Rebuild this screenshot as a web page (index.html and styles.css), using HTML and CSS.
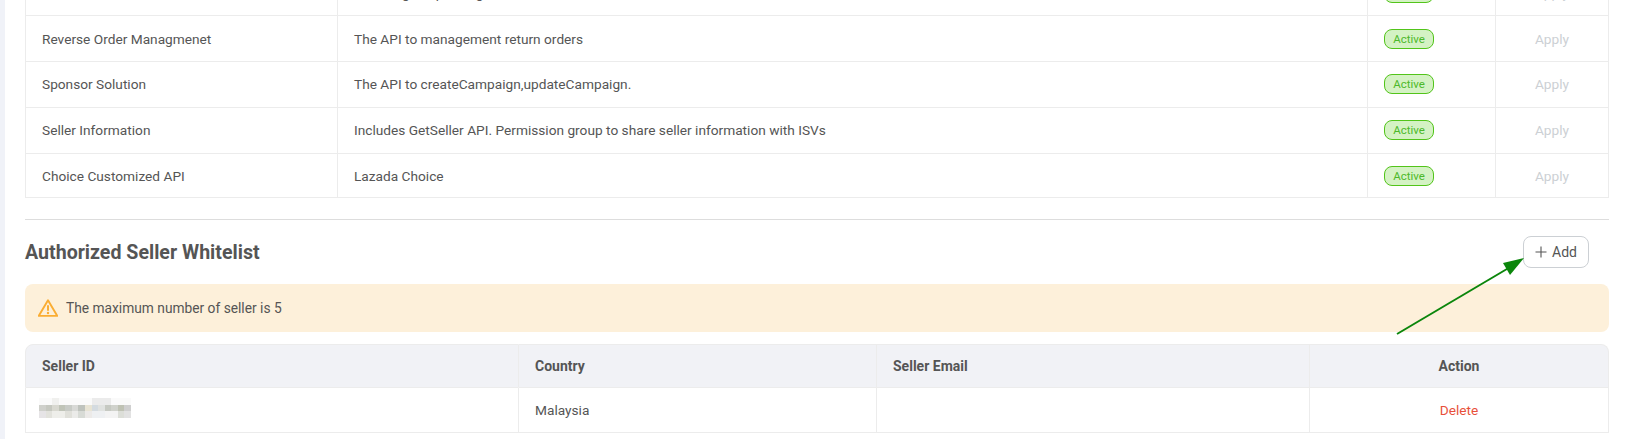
FILE: index.html
```html
<!DOCTYPE html>
<html lang="en">
<head>
    <meta charset="UTF-8">
    <title>Authorized Seller Whitelist</title>
    <link rel="stylesheet" href="styles.css">
</head>
<body>
    <div class="side-strip"></div>
    <main class="content">
        <table class="api-table">
            <colgroup>
                <col class="col-name">
                <col class="col-desc">
                <col class="col-status">
                <col class="col-apply">
            </colgroup>
            <tr>
                <td></td>
                <td>Including the packing</td>
                <td><span class="badge">Active</span></td>
                <td class="apply">Apply</td>
            </tr>
            <tr>
                <td>Reverse Order Managmenet</td>
                <td>The API to management return orders</td>
                <td><span class="badge">Active</span></td>
                <td class="apply">Apply</td>
            </tr>
            <tr class="raised-row">
                <td>Sponsor Solution</td>
                <td>The API to createCampaign,updateCampaign.</td>
                <td><span class="badge">Active</span></td>
                <td class="apply">Apply</td>
            </tr>
            <tr class="raised-row">
                <td>Seller Information</td>
                <td>Includes GetSeller API. Permission group to share seller information with ISVs</td>
                <td><span class="badge">Active</span></td>
                <td class="apply">Apply</td>
            </tr>
            <tr class="last-row">
                <td>Choice Customized API</td>
                <td>Lazada Choice</td>
                <td><span class="badge">Active</span></td>
                <td class="apply">Apply</td>
            </tr>
        </table>

        <hr class="divider">

        <div class="section-head">
            <h2>Authorized Seller Whitelist</h2>
            <button class="add-btn">
                <svg width="12" height="12" viewBox="0 0 12 12"><path d="M6 0.5v11M0.5 6h11" stroke="#555" stroke-width="1.1" fill="none"/></svg>
                Add
            </button>
        </div>

        <div class="alert">
            <svg width="20" height="18" viewBox="0 0 20 18">
                <path d="M10 1.2 L19.3 16.9 H0.7 Z" fill="none" stroke="#faad33" stroke-width="1.9" stroke-linejoin="round"/>
                <path d="M10 6.2v5.6" stroke="#faad33" stroke-width="2"/>
                <circle cx="10" cy="14" r="1.2" fill="#faad33"/>
            </svg>
            <span>The maximum number of seller is 5</span>
        </div>

        <table class="seller-table">
            <colgroup>
                <col class="col-id">
                <col class="col-country">
                <col class="col-email">
                <col class="col-action">
            </colgroup>
            <tr>
                <th>Seller ID</th>
                <th>Country</th>
                <th>Seller Email</th>
                <th class="center">Action</th>
            </tr>
            <tr>
                <td>
                    <svg class="mosaic" width="92" height="20" viewBox="0 0 14 3" preserveAspectRatio="none" shape-rendering="crispEdges">
                        <rect x="0" y="0" width="14" height="1" fill="#fafafa"/>
                        <rect x="2" y="0" width="1" height="1" fill="#f0f0ee"/>
                        <rect x="8" y="0" width="3" height="1" fill="#ebebeb"/>
                        <rect x="0" y="1" width="1" height="1" fill="#cfd0cb"/>
                        <rect x="1" y="1" width="1" height="1" fill="#c6c8c0"/>
                        <rect x="2" y="1" width="1" height="1" fill="#d8d8d0"/>
                        <rect x="3" y="1" width="1" height="1" fill="#c0c4b8"/>
                        <rect x="4" y="1" width="1" height="1" fill="#c8cbc6"/>
                        <rect x="5" y="1" width="1" height="1" fill="#d8d9d6"/>
                        <rect x="6" y="1" width="1" height="1" fill="#bfc3bd"/>
                        <rect x="7" y="1" width="1" height="1" fill="#e8e4d4"/>
                        <rect x="8" y="1" width="1" height="1" fill="#d4dbe0"/>
                        <rect x="9" y="1" width="1" height="1" fill="#e0e2e0"/>
                        <rect x="10" y="1" width="1" height="1" fill="#c6c9c2"/>
                        <rect x="11" y="1" width="1" height="1" fill="#d0d2cc"/>
                        <rect x="12" y="1" width="1" height="1" fill="#bfc2b4"/>
                        <rect x="13" y="1" width="1" height="1" fill="#cfcfcf"/>
                        <rect x="0" y="2" width="1" height="1" fill="#e6e4e6"/>
                        <rect x="1" y="2" width="1" height="1" fill="#e2e2dc"/>
                        <rect x="2" y="2" width="2" height="1" fill="#eeeeea"/>
                        <rect x="4" y="2" width="1" height="1" fill="#e0e0da"/>
                        <rect x="5" y="2" width="1" height="1" fill="#ebebe9"/>
                        <rect x="6" y="2" width="1" height="1" fill="#d8dbd6"/>
                        <rect x="7" y="2" width="1" height="1" fill="#eceae8"/>
                        <rect x="8" y="2" width="2" height="1" fill="#eef0f2"/>
                        <rect x="10" y="2" width="2" height="1" fill="#f3f3f3"/>
                        <rect x="12" y="2" width="1" height="1" fill="#dcded8"/>
                        <rect x="13" y="2" width="1" height="1" fill="#e2e2e2"/>
                    </svg>
                </td>
                <td>Malaysia</td>
                <td></td>
                <td class="center"><a class="delete" href="#">Delete</a></td>
            </tr>
        </table>

        <svg class="arrow" width="136" height="80" viewBox="0 0 136 80">
            <path d="M5 78 L120 10" stroke="#0b860b" stroke-width="2" fill="none"/>
            <path d="M132 2 L111 7 L118 19 Z" fill="#0b860b"/>
        </svg>
    </main>
</body>
</html>
```

FILE: styles.css
```css
* {
    box-sizing: border-box;
}

html, body {
    height: 100%;
}

body {
    margin: 0;
    display: flex;
    overflow: hidden;
    background-color: white;
    font-family: Roboto, "Liberation Sans", sans-serif;
    font-size: 14px;
    color: #555;
}

.side-strip {
    width: 5px;
    flex-shrink: 0;
    background-color: #f0f2f8;
}

.content {
    position: relative;
    width: 1604px;
    padding-left: 20px;
    flex-shrink: 0;
}

table {
    width: 100%;
    table-layout: fixed;
    border-collapse: separate;
    border-spacing: 0;
}

td, th {
    padding: 0 16px;
    border-right: 1px solid #ececec;
    border-bottom: 1px solid #ececec;
}

td {
    font-size: 13.7px;
}

td:first-child, th:first-child {
    border-left: 1px solid #ececec;
}

/* first row is scrolled out of the window */
.api-table {
    margin-top: -30px;
}

.api-table tr {
    height: 46px;
}

.api-table .raised-row td {
    padding-bottom: 2px;
}

.api-table .last-row {
    height: 44px;
}

.col-name { width: 313px; }
.col-status { width: 128px; }
.col-apply { width: 113px; }

.badge {
    display: block;
    width: 50px;
    height: 20px;
    border: 1px solid #52c41a;
    border-radius: 8px;
    background-color: #d4f2c4;
    color: #4cb92a;
    font-size: 11.5px;
    line-height: 18px;
    text-align: center;
}

.apply {
    text-align: center;
    color: #ccd0d4;
}

.divider {
    height: 1px;
    margin: 21px 0 0;
    border: 0;
    background-color: #ddd;
}

.section-head {
    display: flex;
    justify-content: space-between;
    align-items: center;
    height: 64px;
    padding-right: 20px;
}

h2 {
    margin: 0;
    font-size: 19.6px;
    font-weight: 700;
}

.add-btn {
    display: flex;
    align-items: center;
    justify-content: center;
    gap: 5px;
    width: 66px;
    height: 32px;
    padding: 0;
    border: 1px solid #ccd0d4;
    border-radius: 8px;
    background-color: white;
    color: #555;
    font-family: inherit;
    font-size: 14px;
}

.alert {
    display: flex;
    align-items: center;
    gap: 8px;
    height: 48px;
    padding-left: 13px;
    border-radius: 8px;
    background-color: #fdf0da;
    font-size: 13.75px;
}

.seller-table {
    margin-top: 12px;
}

.seller-table th {
    height: 44px;
    text-align: left;
    font-weight: 700;
    background-color: #f1f2f6;
    border-top: 1px solid #ececec;
}

.seller-table th:first-child {
    border-top-left-radius: 8px;
}

.seller-table th:last-child {
    border-top-right-radius: 8px;
}

.seller-table td {
    height: 45px;
}

.col-id { width: 494px; }
.col-country { width: 358px; }
.col-action { width: 299px; }

.seller-table th.center, .seller-table td.center {
    text-align: center;
}

.mosaic {
    display: block;
    margin-left: -3px;
    margin-top: -4px;
}

.delete {
    color: #e8503a;
    text-decoration: none;
}

/* annotation drawn on top of the screenshot */
.arrow {
    position: absolute;
    left: 1387px;
    top: 256px;
}
```
